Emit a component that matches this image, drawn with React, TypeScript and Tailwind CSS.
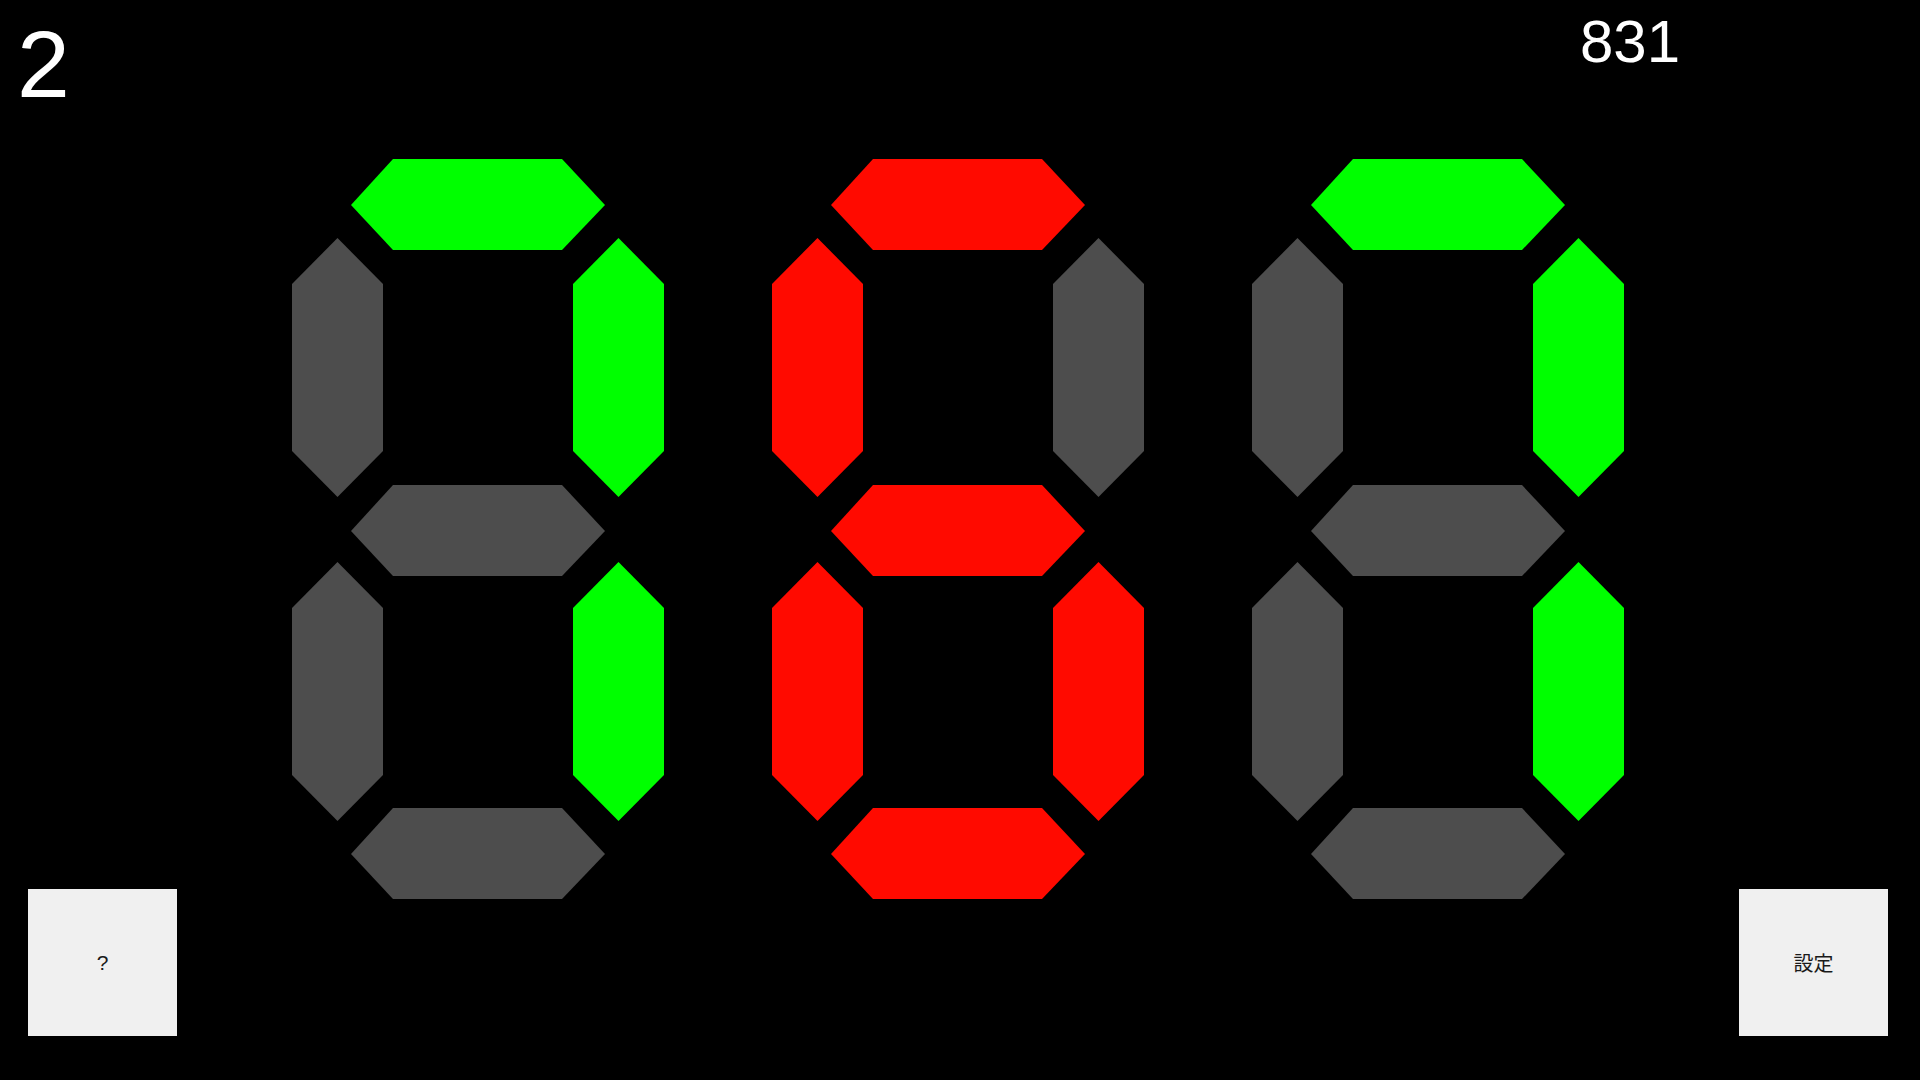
const ON_GREEN = '#00ff00';
const ON_RED = '#ff0a00';
const OFF = '#4d4d4d';

type Seg = 'a' | 'b' | 'c' | 'd' | 'e' | 'f' | 'g';

const horiz = (y: number) =>
  `59,${y + 46} 101,${y} 270,${y} 313,${y + 46} 270,${y + 91} 101,${y + 91}`;

const vert = (x: number, top: number, bottom: number) => {
  const mid = x + 45.5;
  return `${mid},${top} ${x + 91},${top + 46} ${x + 91},${bottom - 46} ${mid},${bottom} ${x},${bottom - 46} ${x},${top + 46}`;
};

const SEGMENTS: Record<Seg, string> = {
  a: horiz(0),
  g: horiz(326),
  d: horiz(649),
  f: vert(0, 79, 338),
  b: vert(281, 79, 338),
  e: vert(0, 403, 662),
  c: vert(281, 403, 662),
};

const DIGITS: Record<number, Seg[]> = {
  6: ['a', 'f', 'g', 'e', 'c', 'd'],
  7: ['a', 'b', 'c'],
};

function Digit({ value, color }: { value: number; color: string }) {
  const lit = DIGITS[value] ?? [];
  return (
    <svg width="372" height="740" viewBox="0 0 372 740" className="shrink-0">
      {(Object.keys(SEGMENTS) as Seg[]).map((s) => (
        <polygon
          key={s}
          points={SEGMENTS[s]}
          fill={lit.includes(s) ? color : OFF}
        />
      ))}
    </svg>
  );
}

export default function App() {
  return (
    <div className="flex h-screen w-full flex-col overflow-hidden bg-black font-['Liberation_Sans',Arial,sans-serif] text-white">
      <div className="flex h-[159px] shrink-0 items-start">
        <span className="ml-[17px] mt-[17px] text-[95px] leading-none">2</span>
        <span className="ml-auto mr-[240px] mt-[12px] text-[60px] leading-none">
          831
        </span>
      </div>

      <div className="flex h-[740px] shrink-0 gap-[108px] pl-[292px]">
        <Digit value={7} color={ON_GREEN} />
        <Digit value={6} color={ON_RED} />
        <Digit value={7} color={ON_GREEN} />
      </div>

      <div className="-mt-[10px] flex shrink-0 justify-between pl-[28px] pr-[32px]">
        <button
          type="button"
          className="flex h-[147px] w-[149px] items-center justify-center bg-[#f0f0f0] text-[21px] text-[#1a1a1a]"
        >
          ?
        </button>
        <button
          type="button"
          className="flex h-[147px] w-[149px] items-center justify-center bg-[#f0f0f0] font-['Noto_Sans_CJK_JP',sans-serif] text-[20px] text-[#1a1a1a]"
        >
          設定
        </button>
      </div>
    </div>
  );
}
